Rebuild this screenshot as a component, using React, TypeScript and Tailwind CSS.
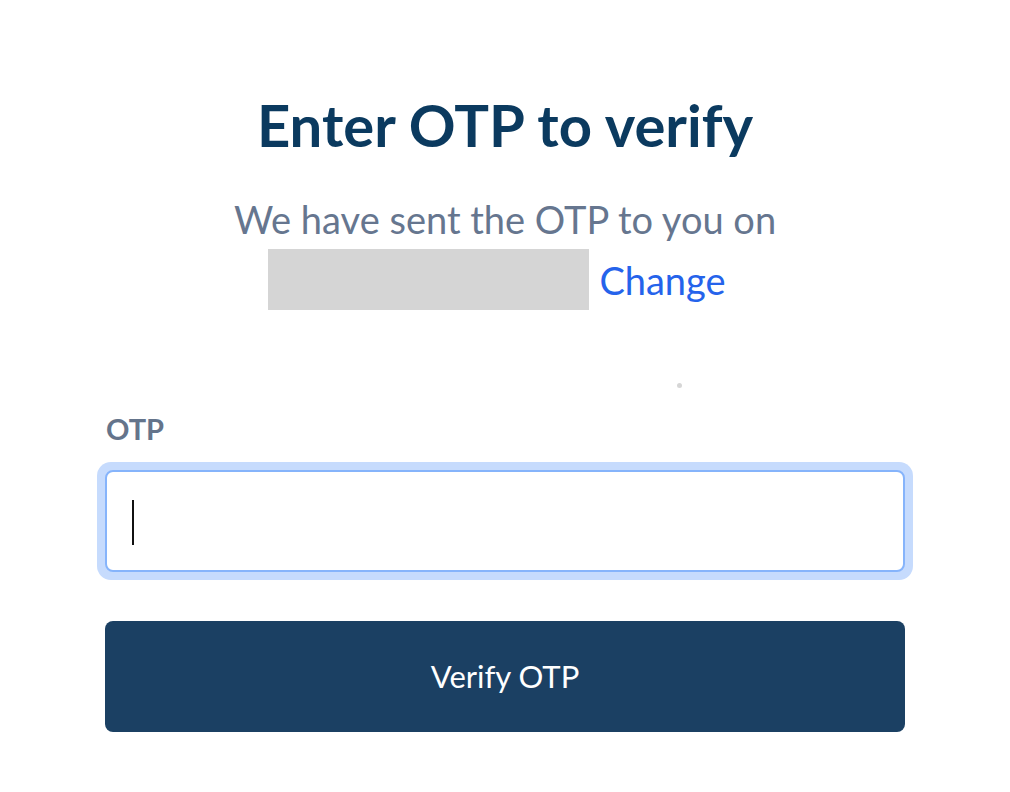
import { useState } from 'react'

export default function App() {
  const [otp, setOtp] = useState('')

  return (
    <div
      className="min-h-screen bg-white flex justify-center"
      style={{ fontFamily: 'Lato, "Open Sans", sans-serif' }}
    >
      <div className="w-[800px] pt-[93px] flex flex-col">
        <h1 className="text-center text-[58px] leading-[64px] font-bold text-[#0b3a5f]">
          Enter OTP to verify
        </h1>

        <div className="mt-[32px] text-center text-[38px] leading-[60px] text-[#66768f]">
          <p>We have sent the OTP to you on</p>
          <div className="flex items-center justify-center gap-[10px] -ml-[16px]">
            <span className="w-[321px] h-[61px] bg-[#d5d5d5] inline-block" />
            <button className="text-[#2563eb]">Change</button>
          </div>
        </div>

        <div className="h-[75px] relative">
          <span className="absolute left-[572px] top-[73px] w-[5px] h-[5px] rounded-full bg-[#d6d6d6]" />
        </div>

        <label className="mt-[29px] text-[29px] leading-[30px] font-bold text-[#64748b] pl-[1px]">
          OTP
        </label>

        <div className="mt-[18px] rounded-[14px] bg-[#c6dbfd] p-[8px] -mx-[8px]">
          <div className="relative h-[102px] rounded-[8px] border-2 border-[#86b4fb] bg-white">
            <input
              value={otp}
              onChange={(e) => setOtp(e.target.value)}
              className="w-full h-full px-[26px] text-[28px] outline-none bg-transparent"
            />
            {otp === '' && (
              <span className="absolute left-[25px] top-[28px] w-[2px] h-[45px] bg-[#111]" />
            )}
          </div>
        </div>

        <button className="mt-[41px] h-[111px] rounded-[8px] bg-[#1b4063] text-white text-[31px]">
          Verify OTP
        </button>
      </div>
    </div>
  )
}
